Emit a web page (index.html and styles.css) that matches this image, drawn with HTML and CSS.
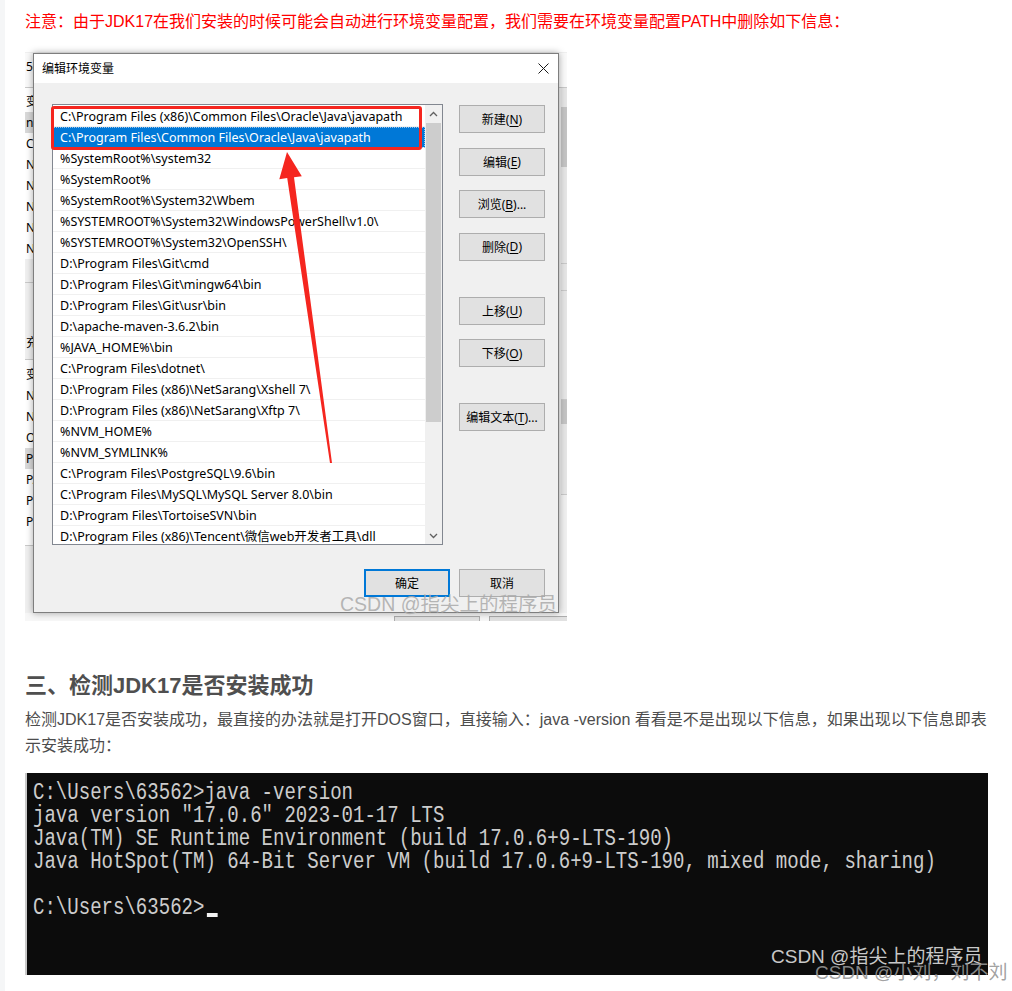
FILE: index.html
```html
<!DOCTYPE html>
<html lang="zh-CN">
<head>
<meta charset="utf-8">
<title>检测JDK17是否安装成功</title>
<link rel="stylesheet" href="styles.css">
</head>
<body>
<main class="article">
  <p class="note">注意：由于JDK17在我们安装的时候可能会自动进行环境变量配置，我们需要在环境变量配置PATH中删除如下信息：</p>

  <figure class="shot shot-env">
    <div class="env-row">
      <div class="strip strip-left">
        <div class="bg-title">5(</div>
        <div class="bg-list">
          <div class="bg-item">变量</div>
          <div class="bg-item hl">nt</div>
          <div class="bg-item">C</div>
          <div class="bg-item">N</div>
          <div class="bg-item">N</div>
          <div class="bg-item">N</div>
          <div class="bg-item">N</div>
          <div class="bg-item">N</div>
        </div>
        <div class="bg-gap"></div>
        <div class="bg-head">充</div>
        <div class="bg-list bg-list2">
          <div class="bg-item">变量</div>
          <div class="bg-item">N</div>
          <div class="bg-item">N</div>
          <div class="bg-item">O</div>
          <div class="bg-item hl">Pa</div>
          <div class="bg-item">PA</div>
          <div class="bg-item">PH</div>
          <div class="bg-item">PR</div>
        </div>
      </div>

      <div class="dialog">
        <div class="titlebar">
          <span class="title">编辑环境变量</span>
          <svg class="close" width="11" height="11" viewBox="0 0 11 11"><path d="M0.5 0.5 L10.5 10.5 M10.5 0.5 L0.5 10.5" stroke="#1a1a1a" stroke-width="1" fill="none"/></svg>
        </div>
        <div class="dlg-body">
          <div class="dlg-main">
            <div class="listbox">
              <div class="rows">
                <div class="row">C:\Program Files (x86)\Common Files\Oracle\Java\javapath</div>
                <div class="row selected">C:\Program Files\Common Files\Oracle\Java\javapath</div>
                <div class="row">%SystemRoot%\system32</div>
                <div class="row">%SystemRoot%</div>
                <div class="row">%SystemRoot%\System32\Wbem</div>
                <div class="row">%SYSTEMROOT%\System32\WindowsPowerShell\v1.0\</div>
                <div class="row">%SYSTEMROOT%\System32\OpenSSH\</div>
                <div class="row">D:\Program Files\Git\cmd</div>
                <div class="row">D:\Program Files\Git\mingw64\bin</div>
                <div class="row">D:\Program Files\Git\usr\bin</div>
                <div class="row">D:\apache-maven-3.6.2\bin</div>
                <div class="row">%JAVA_HOME%\bin</div>
                <div class="row">C:\Program Files\dotnet\</div>
                <div class="row">D:\Program Files (x86)\NetSarang\Xshell 7\</div>
                <div class="row">D:\Program Files (x86)\NetSarang\Xftp 7\</div>
                <div class="row">%NVM_HOME%</div>
                <div class="row">%NVM_SYMLINK%</div>
                <div class="row">C:\Program Files\PostgreSQL\9.6\bin</div>
                <div class="row">C:\Program Files\MySQL\MySQL Server 8.0\bin</div>
                <div class="row">D:\Program Files\TortoiseSVN\bin</div>
                <div class="row">D:\Program Files (x86)\Tencent\微信web开发者工具\dll</div>
              </div>
              <div class="scrollbar">
                <div class="sb-btn">
                  <svg width="9" height="6" viewBox="0 0 9 6"><path d="M1 5 L4.5 1.5 L8 5" stroke="#606060" stroke-width="1.3" fill="none"/></svg>
                </div>
                <div class="sb-track"><div class="sb-thumb"></div></div>
                <div class="sb-btn">
                  <svg width="9" height="6" viewBox="0 0 9 6"><path d="M1 1 L4.5 4.5 L8 1" stroke="#606060" stroke-width="1.3" fill="none"/></svg>
                </div>
              </div>
              <div class="redbox"></div>
            </div>
            <div class="btncol">
              <div class="btn">新建(<u>N</u>)</div>
              <div class="btn">编辑(<u>E</u>)</div>
              <div class="btn">浏览(<u>B</u>)...</div>
              <div class="btn">删除(<u>D</u>)</div>
              <div class="btn sep">上移(<u>U</u>)</div>
              <div class="btn">下移(<u>O</u>)</div>
              <div class="btn sep">编辑文本(<u>T</u>)...</div>
            </div>
          </div>
          <div class="dlg-footer">
            <div class="btn default">确定</div>
            <div class="btn">取消</div>
          </div>
        </div>
      </div>

      <div class="strip strip-right">
        <div class="rs-top"></div>
        <div class="rs-seg rs-a"></div>
        <div class="rs-seg rs-thumb"></div>
        <div class="rs-seg rs-b"></div>
        <div class="rs-seg rs-c"></div>
        <div class="rs-seg rs-d"></div>
        <div class="rs-seg rs-thumb2"></div>
        <div class="rs-seg rs-e"></div>
      </div>
    </div>
    <div class="strip-bottom">
      <div class="ghost-btn"></div>
      <div class="ghost-btn"></div>
    </div>

    <svg class="arrow" width="542" height="569" viewBox="0 0 542 569">
      <polygon points="262,100 276.8,124.2 269,125.3 307,411 305,411 262.2,126.1 254.3,127.2" fill="#f5261f"/>
    </svg>
    <span class="wm wm-env">CSDN @指尖上的程序员</span>
  </figure>

  <h3 class="section-title">三、检测JDK17是否安装成功</h3>
  <p class="text">检测JDK17是否安装成功，最直接的办法就是打开DOS窗口，直接输入：java -version 看看是不是出现以下信息，如果出现以下信息即表示安装成功：</p>

  <figure class="shot shot-term">
    <pre class="console">C:\Users\63562&gt;java -version
java version "17.0.6" 2023-01-17 LTS
Java(TM) SE Runtime Environment (build 17.0.6+9-LTS-190)
Java HotSpot(TM) 64-Bit Server VM (build 17.0.6+9-LTS-190, mixed mode, sharing)

C:\Users\63562&gt;<span class="cursor"></span></pre>
    <span class="wm wm-term1">CSDN @指尖上的程序员</span>
    <span class="wm wm-term2">CSDN @小刘，刘不刘</span>
  </figure>
</main>
</body>
</html>
```

FILE: styles.css
```css
html, body {
  margin: 0;
  padding: 0;
}

body {
  background: #f5f6f7;
  font-family: "Liberation Sans", "Noto Sans CJK SC", sans-serif;
}

.article {
  margin-left: 5px;
  background: #fff;
  min-height: 991px;
  box-sizing: border-box;
  padding: 9px 22px 0 20px;
}

.note {
  margin: 0;
  color: #f00;
  font-size: 16px;
  line-height: 26px;
}

.shot {
  margin: 0;
  position: relative;
}

/* ---------- environment variable screenshot ---------- */
.shot-env {
  margin-top: 17px;
  width: 542px;
  height: 569px;
  background: #f0f0f0;
  display: flex;
  flex-direction: column;
  padding-top: 1px;
  box-sizing: border-box;
}

.env-row {
  display: flex;
  height: 560px;
}

.strip {
  width: 8px;
  flex: none;
  overflow: hidden;
  display: flex;
  flex-direction: column;
  font-family: "Noto Sans", "Noto Sans CJK SC", sans-serif;
  font-size: 12px;
  color: #000;
  white-space: nowrap;
}

.strip-left {
  background: #f0f0f0;
}

.bg-title {
  flex: none;
  height: 34px;
  line-height: 28px;
  padding-left: 1px;
  background: #fafafa;
  border-bottom: 1px solid #c9c9c9;
}

.bg-list {
  flex: none;
  background: #fff;
  padding-top: 3px;
}

.bg-item {
  height: 21px;
  line-height: 21px;
  padding-left: 1px;
}

.bg-item.hl {
  background: #d9d9d9;
}

.bg-gap {
  flex: none;
  height: 23px;
  border-bottom: 1px solid #c9c9c9;
  background: #f0f0f0;
}

.bg-head {
  flex: none;
  height: 26px;
  padding-top: 50px;
  line-height: 20px;
  padding-left: 1px;
  border-bottom: 1px solid #c9c9c9;
}

.bg-list2 {
  padding-top: 4px;
  height: 181px;
  border-bottom: 1px solid #c9c9c9;
}

.strip-right {
  background: #f0f0f0;
}

.rs-top {
  flex: none;
  height: 34px;
  background: #fafafa;
  border-bottom: 1px solid #c9c9c9;
}

.rs-seg {
  flex: none;
  margin-left: 2px;
  width: 6px;
  background: #e6e6e6;
}

.rs-a { height: 19px; }
.rs-thumb { height: 60px; background: #c4c4c4; }
.rs-b { height: 96px; border-bottom: 1px solid #c9c9c9; }
.rs-c { height: 26px; border-bottom: 1px solid #c9c9c9; }
.rs-d { height: 108px; border-bottom: 1px solid #c9c9c9; }
.rs-thumb2 { height: 24px; background: #c4c4c4; }
.rs-e { height: 70px; border-bottom: 1px solid #c9c9c9; }

.strip-bottom {
  height: 8px;
  background: #f7f7f7;
  display: flex;
  gap: 9px;
  padding-left: 369px;
  padding-top: 3px;
  box-sizing: border-box;
  overflow: hidden;
}

.ghost-btn {
  flex: none;
  width: 86px;
  height: 10px;
  box-sizing: border-box;
  border: 1px solid #adadad;
  background: #e1e1e1;
}

/* dialog */
.dialog {
  flex: none;
  width: 526px;
  height: 560px;
  box-sizing: border-box;
  border: 1px solid #7e7e7e;
  background: #f0f0f0;
  display: flex;
  flex-direction: column;
  box-shadow: 0 0 7px rgba(0, 0, 0, 0.35);
  font-family: "Noto Sans", "Noto Sans CJK SC", sans-serif;
  font-size: 12px;
  color: #000;
  position: relative;
  z-index: 1;
}

.titlebar {
  height: 29px;
  background: #fff;
  display: flex;
  align-items: center;
  justify-content: space-between;
  padding: 0 9px 0 8px;
}

.title {
  font-size: 12px;
  line-height: 16px;
}

.close {
  display: block;
}

.dlg-body {
  flex: 1;
  display: flex;
  flex-direction: column;
  padding: 21px 13px 15px 18px;
}

.dlg-main {
  display: flex;
  gap: 16px;
}

.listbox {
  width: 391px;
  height: 441px;
  box-sizing: border-box;
  border: 1px solid #828790;
  background: #fff;
  display: flex;
  position: relative;
}

.rows {
  width: 372px;
  padding-top: 1px;
  overflow: hidden;
}

.row {
  height: 21px;
  box-sizing: border-box;
  border-bottom: 1px solid #f0f0f0;
  padding-left: 7px;
  line-height: 22px;
  font-size: 12.5px;
  white-space: nowrap;
}

.row.selected {
  background: #0078d7;
  color: #fff;
  outline: 1px dotted #9bc5ea;
  outline-offset: -1px;
}

.scrollbar {
  width: 17px;
  background: #f0f0f0;
  display: flex;
  flex-direction: column;
}

.sb-btn {
  height: 17px;
  display: flex;
  align-items: center;
  justify-content: center;
}

.sb-track {
  flex: 1;
  padding: 1px 1px 0;
}

.sb-thumb {
  height: 299px;
  background: #cdcdcd;
}

.redbox {
  position: absolute;
  left: -2px;
  top: 1px;
  width: 371px;
  height: 44px;
  box-sizing: border-box;
  border: 3px solid #f5261f;
  border-radius: 3px;
}

.btncol {
  width: 86px;
  display: flex;
  flex-direction: column;
  padding-top: 1px;
}

.btn {
  width: 86px;
  height: 28px;
  box-sizing: border-box;
  border: 1px solid #adadad;
  background: #e1e1e1;
  display: flex;
  align-items: center;
  justify-content: center;
  font-size: 12px;
  white-space: nowrap;
}

.btncol .btn + .btn {
  margin-top: 14.5px;
}

.btncol .btn.sep {
  margin-top: 36px;
}

.btn u {
  text-decoration-thickness: 1px;
  text-underline-offset: 2px;
}

.dlg-footer {
  margin-top: 24px;
  display: flex;
  justify-content: flex-end;
  gap: 9px;
}

.btn.default {
  border: 2px solid #0078d7;
}

.arrow {
  position: absolute;
  left: 0;
  top: 0;
  z-index: 2;
  pointer-events: none;
}

.wm {
  position: absolute;
  white-space: nowrap;
  z-index: 3;
  font-family: "Liberation Sans", "Noto Sans CJK SC", sans-serif;
  font-size: 19px;
  line-height: 26px;
}

.wm-env {
  left: 315px;
  top: 539px;
  font-size: 19.5px;
  color: rgba(170, 170, 170, 0.85);
}

/* ---------- headings & text ---------- */
.section-title {
  margin: 49px 0 0;
  font-size: 22px;
  line-height: 32px;
  font-weight: bold;
  color: #4f4f4f;
}

.text {
  margin: 5px 0 0;
  font-size: 16px;
  line-height: 26px;
  color: #4d4d4d;
}

/* ---------- terminal screenshot ---------- */
.shot-term {
  margin-top: 14px;
  width: 963px;
  height: 202px;
  box-sizing: border-box;
  background: #0c0c0c;
  border-left: 2px solid #c8c8c8;
  padding: 9px 0 0 6px;
}

.console {
  margin: 0;
  font-family: "Liberation Mono", monospace;
  font-size: 23px;
  line-height: 23px;
  color: #cccccc;
  transform: scaleX(0.828);
  transform-origin: left top;
  white-space: pre;
}

.cursor {
  display: inline-block;
  width: 13px;
  height: 4px;
  margin-left: 3px;
  background: #f2f2f2;
  vertical-align: -3px;
}

.wm-term1 {
  left: 744px;
  top: 171px;
  color: #c8c8c8;
}

.wm-term2 {
  left: 788px;
  top: 187px;
  color: rgba(150, 150, 150, 0.9);
}
```
